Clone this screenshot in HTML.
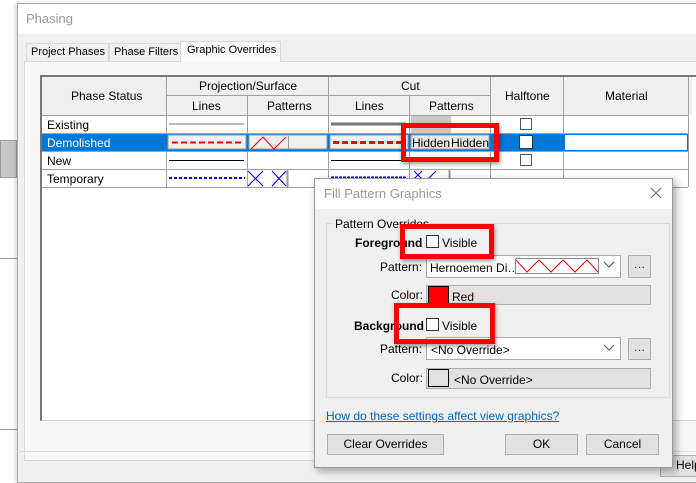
<!DOCTYPE html>
<html><head><meta charset="utf-8"><style>
*{box-sizing:border-box;margin:0;padding:0}
body{width:696px;height:473px;overflow:hidden;background:#fff;font-family:"Liberation Sans",sans-serif;font-size:12px;color:#000;position:relative}
.a{position:absolute}
.t{position:absolute;white-space:nowrap}
.cb{position:absolute;width:13px;height:13px;border:1px solid #333;background:#fff}
.red{position:absolute;border:5px solid #f00;box-shadow:1px 2px 4px rgba(0,0,0,.4)}
.btn{position:absolute;background:#e1e1e1;border:1px solid #adadad;text-align:center;line-height:18px}
</style></head><body>
<div class="a" style="left:0;top:140px;width:17px;height:38px;background:#c8c8c8;border:1px solid #999"></div>
<div class="a" style="left:0;top:258px;width:17px;height:1px;background:#999"></div>
<div class="a" style="left:0;top:429px;width:17px;height:1px;background:#999"></div>
<div class="a" style="left:17px;top:3px;width:690px;height:480px;background:#f0f0f0;border:1px solid #aaa;box-shadow:-2px 0 4px rgba(0,0,0,.15)"></div>
<div class="a" style="left:18px;top:4px;width:680px;height:30px;background:#fff"></div>
<div class="t" style="left:26px;top:11px;font-size:13px;color:#999">Phasing</div>
<div class="a" style="left:24px;top:61px;width:680px;height:400px;border:1px solid #d9d9d9;background:#f7f7f7"></div>
<div class="a" style="left:26px;top:43px;width:83px;height:18px;border:1px solid #d9d9d9;border-bottom:none;background:#f0f0f0"></div>
<div class="t" style="left:31px;top:46px;font-size:11px">Project Phases</div>
<div class="a" style="left:109px;top:43px;width:72px;height:18px;border:1px solid #d9d9d9;border-bottom:none;background:#f0f0f0"></div>
<div class="t" style="left:114px;top:46px;font-size:11px">Phase Filters</div>
<div class="a" style="left:180px;top:41px;width:101px;height:21px;border:1px solid #d9d9d9;border-bottom:none;background:#fafafa"></div>
<div class="t" style="left:187px;top:44px;font-size:11px">Graphic Overrides</div>
<div class="a" style="left:40px;top:75px;width:660px;height:346px;background:#fff;border-left:2px solid #777;border-top:2px solid #777;border-bottom:1px solid #ccc"></div>
<div class="a" style="left:42px;top:77px;width:650px;height:38px;background:#f0f0f0"></div>
<svg class="a" style="left:0;top:0" width="696" height="473">
<g stroke="#a0a0a0" stroke-width="1" fill="none">
<line x1="166.5" y1="77" x2="166.5" y2="187"/>
<line x1="247.5" y1="96" x2="247.5" y2="187"/>
<line x1="328.5" y1="77" x2="328.5" y2="187"/>
<line x1="409.5" y1="96" x2="409.5" y2="187"/>
<line x1="490.5" y1="77" x2="490.5" y2="187"/>
<line x1="563.5" y1="77" x2="563.5" y2="187"/>
<line x1="688.5" y1="77" x2="688.5" y2="187"/>
<line x1="166" y1="95.5" x2="490" y2="95.5"/>
<line x1="42" y1="115.5" x2="688" y2="115.5"/>
<line x1="42" y1="133.5" x2="688" y2="133.5"/>
<line x1="42" y1="151.5" x2="688" y2="151.5"/>
<line x1="42" y1="169.5" x2="688" y2="169.5"/>
<line x1="42" y1="187.5" x2="688" y2="187.5"/>
</g>
<rect x="42" y="134" width="646" height="17" fill="#0078d7"/>
<rect x="565" y="135" width="122" height="15" fill="#fff"/>
<rect x="168" y="135" width="78" height="14" fill="#f0f0f0" stroke="#999"/>
<rect x="249" y="135" width="78" height="14" fill="#f0f0f0" stroke="#999"/>
<rect x="330" y="135" width="78" height="14" fill="#f0f0f0" stroke="#999"/>
<rect x="411" y="135" width="78" height="14" fill="#e8e8e8" stroke="#999"/>
<rect x="411" y="116" width="40" height="17" fill="#c8c8c8"/>
<line x1="169" y1="124" x2="244" y2="124" stroke="#777"/>
<line x1="331" y1="124" x2="406" y2="124" stroke="#777" stroke-width="3"/>
<line x1="172" y1="142.5" x2="243" y2="142.5" stroke="#f00" stroke-width="2" stroke-dasharray="6 3"/>
<line x1="333" y1="142.5" x2="404" y2="142.5" stroke="#f00" stroke-width="3" stroke-dasharray="6 3"/>
<polyline points="251,149 263,137 274,149 286,137" stroke="#f00" fill="none"/>
<line x1="288.5" y1="136" x2="288.5" y2="149" stroke="#999"/>
<line x1="169" y1="160.5" x2="244" y2="160.5" stroke="#000"/>
<line x1="331" y1="160.5" x2="406" y2="160.5" stroke="#000"/>
<line x1="169" y1="178" x2="245" y2="178" stroke="#00f" stroke-width="2" stroke-dasharray="3 2"/>
<line x1="331" y1="178" x2="406" y2="178" stroke="#00f" stroke-width="3" stroke-dasharray="3 1"/>
<path d="M248 171 L263 186 M248 186 L263 171 M272 186 L286 171 M272 171 L286 186" stroke="#00f" fill="none"/>
<line x1="287.5" y1="170" x2="287.5" y2="187" stroke="#999" stroke-width="2"/>
<path d="M414 171 L422 179 M422 171 L414 179 M428 179 L436 171" stroke="#00f" fill="none"/>
<line x1="449.5" y1="170" x2="449.5" y2="187" stroke="#999" stroke-width="2"/>
</svg>
<div class="t" style="left:71px;top:89px">Phase Status</div>
<div class="t" style="left:199px;top:79px">Projection/Surface</div>
<div class="t" style="left:192px;top:99px">Lines</div>
<div class="t" style="left:267px;top:99px">Patterns</div>
<div class="t" style="left:401px;top:79px">Cut</div>
<div class="t" style="left:355px;top:99px">Lines</div>
<div class="t" style="left:429px;top:99px">Patterns</div>
<div class="t" style="left:505px;top:89px">Halftone</div>
<div class="t" style="left:605px;top:89px">Material</div>
<div class="t" style="left:47px;top:118px">Existing</div>
<div class="t" style="left:47px;top:136px;color:#fff">Demolished</div>
<div class="t" style="left:47px;top:154px">New</div>
<div class="t" style="left:47px;top:172px">Temporary</div>
<div class="t" style="left:412px;top:136px">Hidden</div>
<div class="t" style="left:451px;top:136px">Hidden</div>
<div class="cb" style="left:520px;top:118px;width:12px;height:12px;border-color:#555"></div>
<div class="cb" style="left:519px;top:135px;width:14px;height:14px"></div>
<div class="cb" style="left:520px;top:154px;width:12px;height:12px;border-color:#555"></div>
<div class="red" style="left:401px;top:123px;width:98px;height:39px"></div>
<div class="a" style="left:17px;top:451px;width:680px;height:1px;background:#ddd"></div>
<div class="btn" style="left:660px;top:455px;width:50px;height:22px;text-align:left;padding-left:15px">Help</div>
<div class="a" style="left:314px;top:178px;width:359px;height:290px;background:#f0f0f0;border:1px solid #999;box-shadow:3px 3px 8px rgba(0,0,0,.35)"></div>
<div class="a" style="left:315px;top:179px;width:357px;height:30px;background:#fff"></div>
<div class="t" style="left:324px;top:186px;font-size:13px;color:#999">Fill Pattern Graphics</div>
<svg class="a" style="left:650px;top:187px" width="12" height="12"><path d="M1 1 L11 11 M11 1 L1 11" stroke="#777" stroke-width="1.2"/></svg>
<div class="a" style="left:326px;top:223px;width:344px;height:175px;border:1px solid #dcdcdc"></div>
<div class="t" style="left:333px;top:217px;background:#f0f0f0;padding:0 2px">Pattern Overrides</div>
<div class="t" style="left:355px;top:236px;font-weight:bold">Foreground</div>
<div class="cb" style="left:426px;top:235px"></div>
<div class="t" style="left:442px;top:236px">Visible</div>
<div class="t" style="left:380px;top:260px">Pattern:</div>
<div class="a" style="left:426px;top:255px;width:195px;height:23px;background:#fff;border:1px solid #aaa"></div>
<div class="t" style="left:430px;top:261px">Hernoemen Di…</div>
<svg class="a" style="left:515px;top:258px" width="84" height="16"><rect x="0.5" y="0.5" width="83" height="15" fill="#fff" stroke="#888"/><polyline points="1,2 12,14 24,2 36,14 48,2 60,14 72,2 83,14" fill="none" stroke="#f00"/></svg>
<svg class="a" style="left:603px;top:261px" width="12" height="8"><path d="M1 1 L6 6 L11 1" stroke="#555" fill="none"/></svg>
<div class="btn" style="left:628px;top:255px;width:23px;height:23px;line-height:16px;color:#333">…</div>
<div class="t" style="left:391px;top:288px">Color:</div>
<div class="a" style="left:426px;top:285px;width:225px;height:20px;background:#e1e1e1;border:1px solid #adadad"></div>
<div class="a" style="left:428px;top:286px;width:21px;height:18px;background:#f00;border:1px solid #000"></div>
<div class="t" style="left:452px;top:290px">Red</div>
<div class="t" style="left:354px;top:319px;font-weight:bold">Background</div>
<div class="cb" style="left:426px;top:318px"></div>
<div class="t" style="left:442px;top:319px">Visible</div>
<div class="t" style="left:380px;top:342px">Pattern:</div>
<div class="a" style="left:426px;top:337px;width:195px;height:23px;background:#fff;border:1px solid #aaa"></div>
<div class="t" style="left:431px;top:343px">&lt;No Override&gt;</div>
<svg class="a" style="left:603px;top:344px" width="12" height="8"><path d="M1 1 L6 6 L11 1" stroke="#555" fill="none"/></svg>
<div class="btn" style="left:628px;top:338px;width:23px;height:22px;line-height:16px;color:#333">…</div>
<div class="t" style="left:391px;top:371px">Color:</div>
<div class="a" style="left:426px;top:368px;width:225px;height:21px;background:#e1e1e1;border:1px solid #adadad"></div>
<div class="a" style="left:428px;top:369px;width:21px;height:18px;background:#e1e1e1;border:1px solid #000"></div>
<div class="t" style="left:454px;top:373px">&lt;No Override&gt;</div>
<div class="t" style="left:326px;top:409px;color:#0066cc;text-decoration:underline">How do these settings affect view graphics?</div>
<div class="btn" style="left:327px;top:434px;width:117px;height:21px">Clear Overrides</div>
<div class="btn" style="left:505px;top:434px;width:73px;height:21px">OK</div>
<div class="btn" style="left:586px;top:434px;width:73px;height:21px">Cancel</div>
<div class="red" style="left:400px;top:224px;width:94px;height:35px"></div>
<div class="red" style="left:394px;top:303px;width:101px;height:41px"></div>
</body></html>
